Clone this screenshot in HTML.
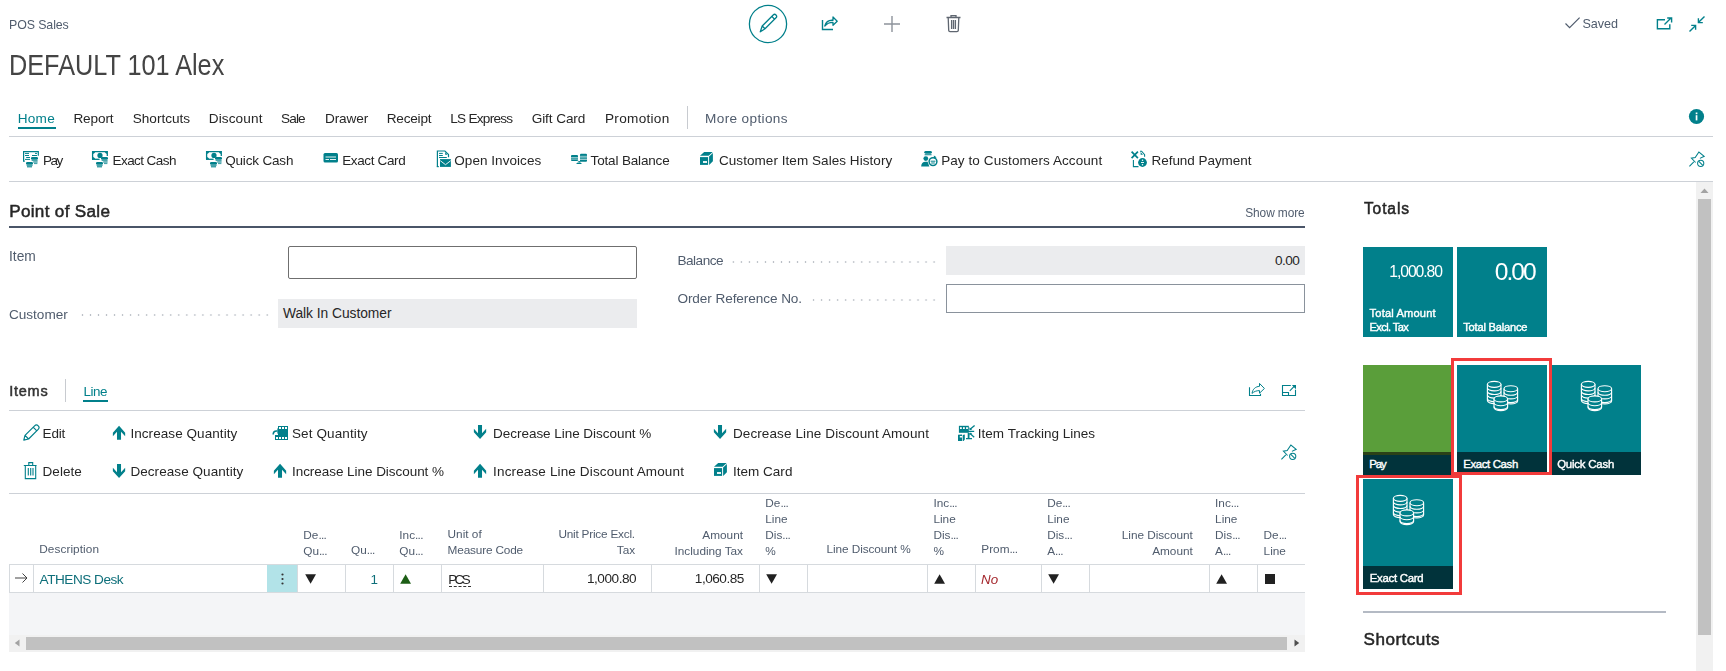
<!DOCTYPE html>
<html><head><meta charset="utf-8"><title>POS Sales</title>
<style>
html,body{margin:0;padding:0;background:#fff;}
body{width:1726px;height:671px;overflow:hidden;position:relative;font-family:"Liberation Sans", sans-serif;}
#w{position:absolute;left:0;top:0;width:1726px;height:671px;opacity:0.999;}
.t{position:absolute;white-space:nowrap;}
.r{position:absolute;display:block;}
</style></head><body><div id="w">
<div class="t" style="top:16.64px;font-size:12.4px;line-height:16.12px;color:#505c6d;letter-spacing:-0.106px;left:9px;">POS Sales</div>
<svg class="r" style="left:748px;top:4px;" width="40" height="40" viewBox="0 0 40 40"><circle cx="20" cy="20" r="18.6" fill="none" stroke="#00808b" stroke-width="1.3"/><path d="M12.3 27.8 L14.2 22 L25.2 11 A1.9 1.9 0 0 1 28 13.8 L17 24.8 Z M14.2 22 L17 24.8 M23.8 12.4 L26.6 15.2" fill="none" stroke="#00808b" stroke-width="1.3" stroke-linejoin="round"/></svg>
<svg class="r" style="left:820px;top:14px;" width="20" height="18" viewBox="0 0 20 18"><path d="M2.5 6 V15.5 H13" fill="none" stroke="#00808b" stroke-width="1.4"/><path d="M4.8 12 C6 7.5 9.5 6 13 6.3 V3 L17.2 7.2 L13 11.2 V8.4 C9.6 8.3 7 9.5 4.8 12 Z" fill="none" stroke="#00808b" stroke-width="1.3" stroke-linejoin="round"/></svg>
<svg class="r" style="left:882px;top:14px;" width="20" height="20" viewBox="0 0 20 20"><path d="M10 2 V18 M2 10 H18" stroke="#8d939b" stroke-width="1.4"/></svg>
<svg class="r" style="left:945px;top:14px;" width="17" height="20" viewBox="0 0 17 20"><path d="M1.5 3.5 H15.5 M6 3.5 V1.6 H11 V3.5 M3.2 3.5 L3.7 16.4 Q3.8 17.6 5 17.6 H12 Q13.2 17.6 13.3 16.4 L13.8 3.5 M6.6 6 V15 M8.5 6 V15 M10.4 6 V15" fill="none" stroke="#5f6670" stroke-width="1.3"/></svg>
<svg class="r" style="left:1564px;top:16px;" width="18" height="14" viewBox="0 0 18 14"><path d="M1.5 7.5 L5.6 11.6 L15.6 1.6" fill="none" stroke="#505c6d" stroke-width="1.2"/></svg>
<div class="t" style="top:16.14px;font-size:12.6px;line-height:16.38px;color:#505c6d;letter-spacing:-0.080px;left:1582.5px;">Saved</div>
<svg class="r" style="left:1655px;top:16px;" width="20" height="16" viewBox="0 0 20 16"><path d="M10 3.8 H2.4 V12.8 H14.8 V8.2" fill="none" stroke="#00808b" stroke-width="1.4"/><path d="M9.5 8.5 L16 2 M12.2 2 H16.6 V6.4" fill="none" stroke="#00808b" stroke-width="1.4"/></svg>
<svg class="r" style="left:1687px;top:14px;" width="20" height="20" viewBox="0 0 20 20"><path d="M2.5 17.5 L8.6 11.4 M4.2 11.4 H8.6 V15.8 M17.5 2.5 L11.4 8.6 M15.8 8.6 H11.4 V4.2" fill="none" stroke="#00808b" stroke-width="1.4"/></svg>
<div class="t" style="top:44.70px;font-size:30px;line-height:39.0px;color:#444;left:8.8px;transform:scaleX(0.842);transform-origin:0 0;">DEFAULT 101 Alex</div>
<div class="t" style="top:109.65px;font-size:13.6px;line-height:17.68px;color:#00808b;letter-spacing:0.272px;left:17.7px;">Home</div>
<div class="t" style="top:109.65px;font-size:13.6px;line-height:17.68px;color:#262626;letter-spacing:-0.123px;left:73.4px;">Report</div>
<div class="t" style="top:109.65px;font-size:13.6px;line-height:17.68px;color:#262626;letter-spacing:0.007px;left:132.7px;">Shortcuts</div>
<div class="t" style="top:109.65px;font-size:13.6px;line-height:17.68px;color:#262626;letter-spacing:0.126px;left:208.7px;">Discount</div>
<div class="t" style="top:109.65px;font-size:13.6px;line-height:17.68px;color:#262626;letter-spacing:-0.871px;left:281.0px;">Sale</div>
<div class="t" style="top:109.65px;font-size:13.6px;line-height:17.68px;color:#262626;letter-spacing:-0.127px;left:325.0px;">Drawer</div>
<div class="t" style="top:109.65px;font-size:13.6px;line-height:17.68px;color:#262626;letter-spacing:-0.203px;left:386.7px;">Receipt</div>
<div class="t" style="top:109.65px;font-size:13.6px;line-height:17.68px;color:#262626;letter-spacing:-0.726px;left:450.2px;">LS Express</div>
<div class="t" style="top:109.65px;font-size:13.6px;line-height:17.68px;color:#262626;letter-spacing:-0.089px;left:531.7px;">Gift Card</div>
<div class="t" style="top:109.65px;font-size:13.6px;line-height:17.68px;color:#262626;letter-spacing:0.289px;left:605.0px;">Promotion</div>
<div class="r" style="left:18px;top:127px;width:38px;height:2px;background:#00808b;"></div>
<div class="r" style="left:687px;top:106px;width:1px;height:23px;background:#c8cbd0;"></div>
<div class="t" style="top:109.65px;font-size:13.6px;line-height:17.68px;color:#505c6d;letter-spacing:0.353px;left:705.1px;">More options</div>
<svg class="r" style="left:1688px;top:108px;" width="17" height="17" viewBox="0 0 17 17"><circle cx="8.5" cy="8.5" r="7.6" fill="#00808b"/><rect x="7.7" y="7.2" width="1.7" height="5.2" fill="#fff"/><rect x="7.7" y="4.5" width="1.7" height="1.7" fill="#fff"/></svg>
<div class="r" style="left:9px;top:136px;width:1704px;height:1px;background:#cdd1d7;"></div>
<div class="t" style="top:151.75px;font-size:13.5px;line-height:17.55px;color:#262626;letter-spacing:-1.580px;left:43.1px;">Pay</div>
<div class="t" style="top:151.75px;font-size:13.5px;line-height:17.55px;color:#262626;letter-spacing:-0.581px;left:112.60000000000001px;">Exact Cash</div>
<div class="t" style="top:151.75px;font-size:13.5px;line-height:17.55px;color:#262626;letter-spacing:-0.174px;left:225.2px;">Quick Cash</div>
<div class="t" style="top:151.75px;font-size:13.5px;line-height:17.55px;color:#262626;letter-spacing:-0.363px;left:342.2px;">Exact Card</div>
<div class="t" style="top:151.75px;font-size:13.5px;line-height:17.55px;color:#262626;letter-spacing:0.050px;left:454.3px;">Open Invoices</div>
<div class="t" style="top:151.75px;font-size:13.5px;line-height:17.55px;color:#262626;letter-spacing:-0.163px;left:590.6px;">Total Balance</div>
<div class="t" style="top:151.75px;font-size:13.5px;line-height:17.55px;color:#262626;letter-spacing:0.054px;left:719.0px;">Customer Item Sales History</div>
<div class="t" style="top:151.75px;font-size:13.5px;line-height:17.55px;color:#262626;letter-spacing:0.084px;left:941.2px;">Pay to Customers Account</div>
<div class="t" style="top:151.75px;font-size:13.5px;line-height:17.55px;color:#262626;letter-spacing:-0.043px;left:1151.5px;">Refund Payment</div>
<svg class="r" style="left:18px;top:145px;" width="22" height="24" viewBox="0 0 22 24"><path d="M5.6 16.2 V6.6 H20.3 V10.7" fill="none" stroke="#00808b" stroke-width="1.2"/><path d="M5 16.2 H6.8" stroke="#00808b" stroke-width="1.2"/><path d="M7 8.4 H11 M17 8.4 H19 M7 10.5 H11 M14 10.5 H19 M8.2 12.5 H12 M7 14.4 H12" stroke="#00808b" stroke-width="1"/><rect x="13" y="12" width="7" height="2.7" rx="1.3" fill="#00808b"/><path d="M13.6 15.6 H19.6" stroke="#00808b" stroke-width="0.8"/><path d="M15.2 17 H19.6" stroke="#00808b" stroke-width="1.1"/><path d="M16 18.6 H19.4" stroke="#00808b" stroke-width="0.8"/><rect x="8" y="17" width="7" height="2.7" rx="1.3" fill="#00808b"/><path d="M8.6 20.6 H14.6" stroke="#00808b" stroke-width="0.8"/><path d="M9 21.8 H14" stroke="#00808b" stroke-width="1.1"/></svg>
<svg class="r" style="left:88px;top:145px;" width="22" height="24" viewBox="0 0 22 24"><path d="M4.6 14.3 V6.6 H19.3 V11" fill="none" stroke="#00808b" stroke-width="1.3"/><path d="M4 14.3 H11.6" stroke="#00808b" stroke-width="1.3"/><path d="M5 7 H7.2 Q6.6 8.6 5 9 Z M19 7 H16.8 Q17.4 8.6 19 9 Z M5 14 H7.2 Q6.6 12.4 5 12 Z" fill="#00808b"/><circle cx="12" cy="10.4" r="2.6" fill="#00808b"/><rect x="13" y="12" width="7" height="2.7" rx="1.3" fill="#00808b"/><path d="M13.6 15.6 H19.6" stroke="#00808b" stroke-width="0.8"/><path d="M15.2 17 H19.6" stroke="#00808b" stroke-width="1.1"/><path d="M16 18.6 H19.4" stroke="#00808b" stroke-width="0.8"/><rect x="8" y="17" width="7" height="2.7" rx="1.3" fill="#00808b"/><path d="M8.6 20.6 H14.6" stroke="#00808b" stroke-width="0.8"/><path d="M9 21.8 H14" stroke="#00808b" stroke-width="1.1"/></svg>
<svg class="r" style="left:202px;top:145px;" width="22" height="24" viewBox="0 0 22 24"><path d="M4.6 14.3 V6.6 H19.3 V11" fill="none" stroke="#00808b" stroke-width="1.3"/><path d="M4 14.3 H11.6" stroke="#00808b" stroke-width="1.3"/><path d="M5 7 H7.2 Q6.6 8.6 5 9 Z M19 7 H16.8 Q17.4 8.6 19 9 Z M5 14 H7.2 Q6.6 12.4 5 12 Z" fill="#00808b"/><circle cx="12" cy="10.4" r="2.6" fill="#00808b"/><rect x="13" y="12" width="7" height="2.7" rx="1.3" fill="#00808b"/><path d="M13.6 15.6 H19.6" stroke="#00808b" stroke-width="0.8"/><path d="M15.2 17 H19.6" stroke="#00808b" stroke-width="1.1"/><path d="M16 18.6 H19.4" stroke="#00808b" stroke-width="0.8"/><rect x="8" y="17" width="7" height="2.7" rx="1.3" fill="#00808b"/><path d="M8.6 20.6 H14.6" stroke="#00808b" stroke-width="0.8"/><path d="M9 21.8 H14" stroke="#00808b" stroke-width="1.1"/></svg>
<svg class="r" style="left:323px;top:152px;" width="16" height="12" viewBox="0 0 16 12"><rect x="0.5" y="1" width="14.5" height="9.5" rx="1.5" fill="#00808b"/><path d="M2.5 5 H13 M2.5 7.5 H6 M7 7.5 H13" stroke="#fff" stroke-width="0.9"/></svg>
<svg class="r" style="left:430px;top:145px;" width="23" height="24" viewBox="0 0 23 24"><path d="M7.4 21.8 V6 H14.9 L18.5 9.4 V12.3" fill="none" stroke="#00808b" stroke-width="1.2"/><path d="M6.8 21.6 H8.8" stroke="#00808b" stroke-width="1.2"/><path d="M15.2 7 L17.6 9.8 H15.2 Z" fill="#00808b"/><path d="M9 8.4 H12.8 M9 10.5 H12.8 M9 12.5 H16.8" stroke="#00808b" stroke-width="1"/><rect x="10" y="14.1" width="10.9" height="7.8" fill="#00808b"/><path d="M10.3 15.7 L15.5 19.7 L20.7 15.7" fill="none" stroke="#fff" stroke-width="0.9"/></svg>
<svg class="r" style="left:570px;top:152px;" width="18" height="13" viewBox="0 0 18 13"><rect x="1" y="2.9" width="7" height="6.1" rx="1" fill="#00808b"/><rect x="10" y="1.8" width="7" height="7.9" rx="1" fill="#00808b"/><path d="M0.5 5.6 H8.5 M0.5 7.1 H8.5 M9.5 4.3 H17.5 M9.5 5.9 H17.5 M9.5 7.5 H17.5" stroke="#fff" stroke-width="0.6"/><path d="M7 8.6 L11 9.4 L9.6 10.6 Z" fill="#00808b"/><path d="M6 11.9 H12 L10.4 10.4 H7.6 Z" fill="#00808b"/></svg>
<svg class="r" style="left:699px;top:151px;" width="16" height="15" viewBox="0 0 16 15"><path d="M1 4.7 L5.2 1 H13.7 L9.6 4.7 Z" fill="#00808b"/><rect x="1" y="6.1" width="8.1" height="7.8" fill="#00808b"/><path d="M10.1 5.6 L13.9 2 V10.3 L10.1 13.9 Z" fill="#00808b"/><rect x="4" y="10.1" width="4" height="1.8" fill="#fff"/></svg>
<svg class="r" style="left:920px;top:149px;" width="18" height="19" viewBox="0 0 18 19"><rect x="4.3" y="1.9" width="7.6" height="2.8" rx="1.4" fill="#00808b"/><rect x="4.5" y="5.3" width="7.2" height="1" rx="0.5" fill="#00808b"/><circle cx="5.8" cy="9.6" r="2.4" fill="#00808b"/><path d="M1.2 17.6 Q1.2 12.8 5.6 12.8 H7.6 L9.4 17.6 Z" fill="#00808b"/><circle cx="13" cy="12.6" r="3.9" fill="none" stroke="#00808b" stroke-width="1.5"/><path d="M10.6 12.2 H15.4 M11.2 14 H14.8" stroke="#00808b" stroke-width="1"/><path d="M13.8 6.6 L16.6 8.2 L14 9.6 Z" fill="#00808b"/></svg>
<svg class="r" style="left:1125px;top:145px;" width="23" height="24" viewBox="0 0 23 24"><path d="M6.6 6.6 L12.9 13.1 M12.9 6.6 L6.6 13.1" stroke="#00808b" stroke-width="1.7"/><path d="M15 6.2 H16.6 L19.6 9.6 V11.8" fill="none" stroke="#00808b" stroke-width="1.1"/><path d="M15.6 7 L18 9.8 H15.6 Z" fill="#00808b"/><path d="M8.4 14.9 V21.6 H13.5" fill="none" stroke="#00808b" stroke-width="1.1"/><circle cx="17.5" cy="17.5" r="4.4" fill="#00808b"/><circle cx="17.5" cy="15.3" r="0.75" fill="#fff"/><rect x="16" y="17.1" width="3" height="0.9" fill="#fff"/><circle cx="17.5" cy="19.7" r="0.75" fill="#fff"/></svg>
<svg class="r" style="left:1688px;top:151px;" width="18" height="18" viewBox="0 0 18 18"><path d="M1.4 15.4 L5.8 10.8 M7.6 11.5 L3.4 7.2 L7.2 6.5 L10.9 1 L16.2 5.3 L11.9 7.4" fill="none" stroke="#00808b" stroke-width="1.05" stroke-linejoin="miter"/><circle cx="12.7" cy="12.3" r="3.1" fill="none" stroke="#00808b" stroke-width="1.05"/><path d="M10.6 10.2 L14.8 14.4" stroke="#00808b" stroke-width="1.05"/></svg>
<div class="r" style="left:9px;top:181px;width:1704px;height:1px;background:#cdd1d7;"></div>
<div class="r" style="left:1696px;top:182px;width:17px;height:489px;background:#f1f1f1;"></div>
<svg class="r" style="left:1696px;top:182px;" width="17" height="17" viewBox="0 0 17 17"><path d="M4.5 11 L8.5 6.5 L12.5 11 Z" fill="#a3a3a3"/></svg>
<div class="r" style="left:1698px;top:199px;width:13px;height:436px;background:#c1c1c1;"></div>
<div class="t" style="top:200.96px;font-size:17.1px;line-height:22.23px;color:#262626;-webkit-text-stroke:0.5px #262626;letter-spacing:0.320px;left:9.2px;">Point of Sale</div>
<div class="t" style="top:206.04px;font-size:11.9px;line-height:15.47px;color:#505c6d;letter-spacing:-0.086px;right:421.39px;text-align:right;">Show more</div>
<div class="r" style="left:9px;top:226px;width:1296px;height:2px;background:#4a5568;"></div>
<div class="t" style="top:247.85px;font-size:13.8px;line-height:17.94px;color:#505c6d;letter-spacing:-0.014px;left:9.0px;">Item</div>
<div class="r" style="left:288px;top:246px;width:349px;height:33px;background:#fff;box-sizing:border-box;border:1px solid #6f6f6f;border-radius:2px;"></div>
<div class="t" style="top:305.65px;font-size:13.6px;line-height:17.68px;color:#505c6d;letter-spacing:-0.022px;left:9.0px;">Customer</div>
<div class="r" style="left:80px;top:314px;width:191.2px;height:2px;background:transparent;background-image:radial-gradient(circle, #b9bec5 0.85px, transparent 1.05px);background-size:8.04px 2px;background-repeat:repeat-x;background-position:right 0;"></div>
<div class="r" style="left:278px;top:299px;width:359px;height:29px;background:#ebecee;"></div>
<div class="t" style="top:305.45px;font-size:13.8px;line-height:17.94px;color:#262626;letter-spacing:-0.043px;left:283.0px;">Walk In Customer</div>
<div class="t" style="top:252.25px;font-size:13.6px;line-height:17.68px;color:#505c6d;letter-spacing:-0.492px;left:677.4px;">Balance</div>
<div class="r" style="left:730px;top:261px;width:208.10000000000002px;height:2px;background:transparent;background-image:radial-gradient(circle, #b9bec5 0.85px, transparent 1.05px);background-size:8.04px 2px;background-repeat:repeat-x;background-position:right 0;"></div>
<div class="r" style="left:946px;top:246px;width:359px;height:29px;background:#ebecee;"></div>
<div class="t" style="top:252.15px;font-size:13.6px;line-height:17.68px;color:#262626;letter-spacing:-0.589px;right:426.89px;text-align:right;">0.00</div>
<div class="t" style="top:290.45px;font-size:13.6px;line-height:17.68px;color:#505c6d;letter-spacing:-0.080px;left:677.4px;">Order Reference No.</div>
<div class="r" style="left:810px;top:299px;width:128.10000000000002px;height:2px;background:transparent;background-image:radial-gradient(circle, #b9bec5 0.85px, transparent 1.05px);background-size:8.04px 2px;background-repeat:repeat-x;background-position:right 0;"></div>
<div class="r" style="left:946px;top:284px;width:359px;height:29px;background:#fff;box-sizing:border-box;border:1px solid #8a929c;"></div>
<div class="t" style="top:198.75px;font-size:15.6px;line-height:20.28px;color:#262626;-webkit-text-stroke:0.5px #262626;letter-spacing:0.891px;left:1363.9px;">Totals</div>
<div class="r" style="left:1363px;top:247px;width:90px;height:90px;background:#00808b;"></div>
<div class="r" style="left:1457px;top:247px;width:90px;height:90px;background:#00808b;"></div>
<div class="t" style="top:261.75px;font-size:15.7px;line-height:20.41px;color:#fff;letter-spacing:-1.074px;right:284.17px;text-align:right;">1,000.80</div>
<div class="t" style="top:255.69px;font-size:24.6px;line-height:31.98px;color:#fff;letter-spacing:-2.024px;right:191.42px;text-align:right;">0.00</div>
<div class="t" style="top:305.94px;font-size:11.1px;line-height:14.43px;color:#fff;-webkit-text-stroke:0.4px #fff;letter-spacing:0.166px;left:1369.6px;">Total Amount</div>
<div class="t" style="top:319.94px;font-size:11.1px;line-height:14.43px;color:#fff;-webkit-text-stroke:0.4px #fff;letter-spacing:-0.626px;left:1369.6px;">Excl. Tax</div>
<div class="t" style="top:319.94px;font-size:11.1px;line-height:14.43px;color:#fff;-webkit-text-stroke:0.4px #fff;letter-spacing:-0.195px;left:1463.2px;">Total Balance</div>
<div class="r" style="left:1363px;top:365px;width:90px;height:110px;background:#5a9e3a;"></div>
<div class="r" style="left:1363px;top:452px;width:90px;height:3px;background:#2b4117;"></div>
<div class="r" style="left:1363px;top:455px;width:90px;height:20px;background:#00333b;"></div>
<div class="t" style="top:456.94px;font-size:11.4px;line-height:14.82px;color:#fff;-webkit-text-stroke:0.4px #fff;letter-spacing:-1.021px;left:1369.2px;">Pay</div>
<div class="r" style="left:1457px;top:365px;width:90px;height:110px;background:#00808b;"></div>
<div class="r" style="left:1457px;top:452px;width:90px;height:23px;background:#00333b;"></div>
<svg class="r" style="left:1486px;top:380px;" width="34" height="33" viewBox="0 0 34 33"><path d="M1.3999999999999995 4.3 V20.6 A6.8 3.0 0 0 0 15.0 20.6 V4.3" fill="#00808b" stroke="#fff" stroke-width="1.15"/><ellipse cx="8.2" cy="4.3" rx="6.8" ry="3.0" fill="#00808b" stroke="#fff" stroke-width="1.15"/><path d="M1.3999999999999995 7.9 A6.8 3.0 0 0 0 15.0 7.9" fill="none" stroke="#fff" stroke-width="1.15"/><path d="M1.3999999999999995 11.5 A6.8 3.0 0 0 0 15.0 11.5" fill="none" stroke="#fff" stroke-width="1.15"/><path d="M1.3999999999999995 15.100000000000001 A6.8 3.0 0 0 0 15.0 15.100000000000001" fill="none" stroke="#fff" stroke-width="1.15"/><path d="M1.3999999999999995 18.7 A6.8 3.0 0 0 0 15.0 18.7" fill="none" stroke="#fff" stroke-width="1.15"/><path d="M18.0 8.7 V20.9 A6.8 3.0 0 0 0 31.6 20.9 V8.7" fill="#00808b" stroke="#fff" stroke-width="1.15"/><ellipse cx="24.8" cy="8.7" rx="6.8" ry="3.0" fill="#00808b" stroke="#fff" stroke-width="1.15"/><path d="M18.0 12.299999999999999 A6.8 3.0 0 0 0 31.6 12.299999999999999" fill="none" stroke="#fff" stroke-width="1.15"/><path d="M18.0 15.899999999999999 A6.8 3.0 0 0 0 31.6 15.899999999999999" fill="none" stroke="#fff" stroke-width="1.15"/><path d="M18.0 19.5 A6.8 3.0 0 0 0 31.6 19.5" fill="none" stroke="#fff" stroke-width="1.15"/><path d="M8.0 18.9 V27.6 A6.8 3.0 0 0 0 21.6 27.6 V18.9" fill="#00808b" stroke="#fff" stroke-width="1.15"/><ellipse cx="14.8" cy="18.9" rx="6.8" ry="3.0" fill="#00808b" stroke="#fff" stroke-width="1.15"/><path d="M8.0 22.7 A6.8 3.0 0 0 0 21.6 22.7" fill="none" stroke="#fff" stroke-width="1.15"/><path d="M8.0 26.5 A6.8 3.0 0 0 0 21.6 26.5" fill="none" stroke="#fff" stroke-width="1.15"/></svg>
<div class="t" style="top:456.94px;font-size:11.4px;line-height:14.82px;color:#fff;-webkit-text-stroke:0.4px #fff;letter-spacing:-0.354px;left:1463.2px;">Exact Cash</div>
<div class="r" style="left:1551px;top:365px;width:90px;height:110px;background:#00808b;"></div>
<div class="r" style="left:1551px;top:452px;width:90px;height:23px;background:#00333b;"></div>
<svg class="r" style="left:1580px;top:380px;" width="34" height="33" viewBox="0 0 34 33"><path d="M1.3999999999999995 4.3 V20.6 A6.8 3.0 0 0 0 15.0 20.6 V4.3" fill="#00808b" stroke="#fff" stroke-width="1.15"/><ellipse cx="8.2" cy="4.3" rx="6.8" ry="3.0" fill="#00808b" stroke="#fff" stroke-width="1.15"/><path d="M1.3999999999999995 7.9 A6.8 3.0 0 0 0 15.0 7.9" fill="none" stroke="#fff" stroke-width="1.15"/><path d="M1.3999999999999995 11.5 A6.8 3.0 0 0 0 15.0 11.5" fill="none" stroke="#fff" stroke-width="1.15"/><path d="M1.3999999999999995 15.100000000000001 A6.8 3.0 0 0 0 15.0 15.100000000000001" fill="none" stroke="#fff" stroke-width="1.15"/><path d="M1.3999999999999995 18.7 A6.8 3.0 0 0 0 15.0 18.7" fill="none" stroke="#fff" stroke-width="1.15"/><path d="M18.0 8.7 V20.9 A6.8 3.0 0 0 0 31.6 20.9 V8.7" fill="#00808b" stroke="#fff" stroke-width="1.15"/><ellipse cx="24.8" cy="8.7" rx="6.8" ry="3.0" fill="#00808b" stroke="#fff" stroke-width="1.15"/><path d="M18.0 12.299999999999999 A6.8 3.0 0 0 0 31.6 12.299999999999999" fill="none" stroke="#fff" stroke-width="1.15"/><path d="M18.0 15.899999999999999 A6.8 3.0 0 0 0 31.6 15.899999999999999" fill="none" stroke="#fff" stroke-width="1.15"/><path d="M18.0 19.5 A6.8 3.0 0 0 0 31.6 19.5" fill="none" stroke="#fff" stroke-width="1.15"/><path d="M8.0 18.9 V27.6 A6.8 3.0 0 0 0 21.6 27.6 V18.9" fill="#00808b" stroke="#fff" stroke-width="1.15"/><ellipse cx="14.8" cy="18.9" rx="6.8" ry="3.0" fill="#00808b" stroke="#fff" stroke-width="1.15"/><path d="M8.0 22.7 A6.8 3.0 0 0 0 21.6 22.7" fill="none" stroke="#fff" stroke-width="1.15"/><path d="M8.0 26.5 A6.8 3.0 0 0 0 21.6 26.5" fill="none" stroke="#fff" stroke-width="1.15"/></svg>
<div class="t" style="top:456.94px;font-size:11.4px;line-height:14.82px;color:#fff;-webkit-text-stroke:0.4px #fff;letter-spacing:-0.202px;left:1557.2px;">Quick Cash</div>
<div class="r" style="left:1451px;top:358px;width:101px;height:117px;background:transparent;box-sizing:border-box;border:3px solid #f23b3b;"></div>
<div class="r" style="left:1363px;top:479px;width:90px;height:110px;background:#00808b;"></div>
<div class="r" style="left:1363px;top:566px;width:90px;height:23px;background:#00333b;"></div>
<svg class="r" style="left:1392px;top:494px;" width="34" height="33" viewBox="0 0 34 33"><path d="M1.3999999999999995 4.3 V20.6 A6.8 3.0 0 0 0 15.0 20.6 V4.3" fill="#00808b" stroke="#fff" stroke-width="1.15"/><ellipse cx="8.2" cy="4.3" rx="6.8" ry="3.0" fill="#00808b" stroke="#fff" stroke-width="1.15"/><path d="M1.3999999999999995 7.9 A6.8 3.0 0 0 0 15.0 7.9" fill="none" stroke="#fff" stroke-width="1.15"/><path d="M1.3999999999999995 11.5 A6.8 3.0 0 0 0 15.0 11.5" fill="none" stroke="#fff" stroke-width="1.15"/><path d="M1.3999999999999995 15.100000000000001 A6.8 3.0 0 0 0 15.0 15.100000000000001" fill="none" stroke="#fff" stroke-width="1.15"/><path d="M1.3999999999999995 18.7 A6.8 3.0 0 0 0 15.0 18.7" fill="none" stroke="#fff" stroke-width="1.15"/><path d="M18.0 8.7 V20.9 A6.8 3.0 0 0 0 31.6 20.9 V8.7" fill="#00808b" stroke="#fff" stroke-width="1.15"/><ellipse cx="24.8" cy="8.7" rx="6.8" ry="3.0" fill="#00808b" stroke="#fff" stroke-width="1.15"/><path d="M18.0 12.299999999999999 A6.8 3.0 0 0 0 31.6 12.299999999999999" fill="none" stroke="#fff" stroke-width="1.15"/><path d="M18.0 15.899999999999999 A6.8 3.0 0 0 0 31.6 15.899999999999999" fill="none" stroke="#fff" stroke-width="1.15"/><path d="M18.0 19.5 A6.8 3.0 0 0 0 31.6 19.5" fill="none" stroke="#fff" stroke-width="1.15"/><path d="M8.0 18.9 V27.6 A6.8 3.0 0 0 0 21.6 27.6 V18.9" fill="#00808b" stroke="#fff" stroke-width="1.15"/><ellipse cx="14.8" cy="18.9" rx="6.8" ry="3.0" fill="#00808b" stroke="#fff" stroke-width="1.15"/><path d="M8.0 22.7 A6.8 3.0 0 0 0 21.6 22.7" fill="none" stroke="#fff" stroke-width="1.15"/><path d="M8.0 26.5 A6.8 3.0 0 0 0 21.6 26.5" fill="none" stroke="#fff" stroke-width="1.15"/></svg>
<div class="t" style="top:571.04px;font-size:11.4px;line-height:14.82px;color:#fff;-webkit-text-stroke:0.4px #fff;letter-spacing:-0.287px;left:1369.8px;">Exact Card</div>
<div class="r" style="left:1356px;top:475px;width:106px;height:120px;background:transparent;box-sizing:border-box;border:3px solid #f23b3b;"></div>
<div class="r" style="left:1363px;top:611px;width:303px;height:2px;background:#b4bac4;"></div>
<div class="t" style="top:628.76px;font-size:17.1px;line-height:22.23px;color:#262626;-webkit-text-stroke:0.5px #262626;letter-spacing:0.471px;left:1363.6px;">Shortcuts</div>
<div class="t" style="top:382.35px;font-size:14.5px;line-height:18.85px;color:#333;-webkit-text-stroke:0.5px #333;letter-spacing:0.762px;left:9.2px;">Items</div>
<div class="r" style="left:65px;top:379px;width:1px;height:23px;background:#c8cbd0;"></div>
<div class="t" style="top:382.65px;font-size:13.4px;line-height:17.42px;color:#00808b;letter-spacing:-0.446px;left:83.4px;">Line</div>
<div class="r" style="left:83px;top:400px;width:25px;height:2px;background:#00808b;"></div>
<svg class="r" style="left:1247px;top:381px;" width="20" height="18" viewBox="0 0 20 18"><path d="M2.5 6.2 V14.5 H13.8 M13.5 12.8 V15" fill="none" stroke="#00808b" stroke-width="1.1"/><path d="M5 12.4 C5.6 8 8.6 5.6 12.5 5.3 V2.4 L17.4 7.5 L12.5 12.2 V9.6 C9.3 9.6 7 10.6 5 12.4 Z" fill="none" stroke="#00808b" stroke-width="1" stroke-linejoin="miter"/></svg>
<svg class="r" style="left:1280px;top:383px;" width="18" height="16" viewBox="0 0 18 16"><path d="M2 2.5 H10.8 M2.5 2 V13 M2 12.5 H16 M15.5 6.8 V13 M2.5 9.5 H8.5 V13 M9.8 7.8 L14.4 3.2" fill="none" stroke="#00808b" stroke-width="1.1"/><path d="M11.8 2 H16 V6.2 Z" fill="#00808b"/></svg>
<div class="r" style="left:9px;top:410px;width:1296px;height:1px;background:#cdd1d7;"></div>
<div class="t" style="top:425.05px;font-size:13.5px;line-height:17.55px;color:#262626;letter-spacing:-0.220px;left:42.6px;">Edit</div>
<div class="t" style="top:425.05px;font-size:13.5px;line-height:17.55px;color:#262626;letter-spacing:0.069px;left:130.39999999999998px;">Increase Quantity</div>
<div class="t" style="top:425.05px;font-size:13.5px;line-height:17.55px;color:#262626;letter-spacing:0.119px;left:292.0px;">Set Quantity</div>
<div class="t" style="top:425.05px;font-size:13.5px;line-height:17.55px;color:#262626;letter-spacing:-0.038px;left:493.09999999999997px;">Decrease Line Discount %</div>
<div class="t" style="top:425.05px;font-size:13.5px;line-height:17.55px;color:#262626;letter-spacing:0.116px;left:732.9000000000001px;">Decrease Line Discount Amount</div>
<div class="t" style="top:425.05px;font-size:13.5px;line-height:17.55px;color:#262626;letter-spacing:0.014px;left:977.8000000000001px;">Item Tracking Lines</div>
<div class="t" style="top:463.35px;font-size:13.5px;line-height:17.55px;color:#262626;letter-spacing:0.014px;left:42.6px;">Delete</div>
<div class="t" style="top:463.35px;font-size:13.5px;line-height:17.55px;color:#262626;letter-spacing:0.068px;left:130.39999999999998px;">Decrease Quantity</div>
<div class="t" style="top:463.35px;font-size:13.5px;line-height:17.55px;color:#262626;letter-spacing:-0.047px;left:292.0px;">Increase Line Discount %</div>
<div class="t" style="top:463.35px;font-size:13.5px;line-height:17.55px;color:#262626;letter-spacing:0.141px;left:493.09999999999997px;">Increase Line Discount Amount</div>
<div class="t" style="top:463.35px;font-size:13.5px;line-height:17.55px;color:#262626;letter-spacing:0.029px;left:732.9000000000001px;">Item Card</div>
<svg class="r" style="left:22px;top:424px;" width="18" height="18" viewBox="0 0 18 18"><path d="M1.8 16.2 L3 11.4 L12.6 1.8 A1.9 1.9 0 0 1 16.2 5.4 L6.6 15 Z M3 11.4 L6.6 15 M11.2 3.2 L14.8 6.8" fill="none" stroke="#00808b" stroke-width="1.2" stroke-linejoin="round"/></svg>
<svg class="r" style="left:22px;top:461px;" width="16" height="19" viewBox="0 0 16 19"><path d="M1.8 4.5 H14.6 M6.8 4.5 V1.6 H10.7 V4.5 M3.3 4.5 V17.6 H13.7 V4.5 M6.3 7 V14.6 M8.7 7 V14.6 M11 7 V14.6" fill="none" stroke="#00808b" stroke-width="1.1"/></svg>
<svg class="r" style="left:112px;top:424px;" width="14" height="17" viewBox="0 0 14 17"><path d="M7.06 1.87 L13.16 8.75 L13.16 12.19 L9.03 7.77 L9.03 15.83 L4.99 15.83 L4.99 7.77 L0.87 12.19 L0.87 8.75 Z" fill="#00808b"/></svg>
<svg class="r" style="left:112px;top:463px;" width="14" height="17" viewBox="0 0 14 17"><path d="M7.06 15.03 L13.16 8.15 L13.16 4.71 L9.03 9.13 L9.03 1.07 L4.99 1.07 L4.99 9.13 L0.87 4.71 L0.87 8.15 Z" fill="#00808b"/></svg>
<svg class="r" style="left:272px;top:425px;" width="17" height="15" viewBox="0 0 17 15"><rect x="3" y="1" width="13" height="14" fill="#00808b"/><rect x="4" y="12" width="2" height="2" fill="#fff"/><rect x="7" y="12" width="2" height="2" fill="#fff"/><rect x="10" y="12" width="2" height="2" fill="#fff"/><rect x="13" y="12" width="2" height="2" fill="#fff"/><rect x="7" y="2" width="2" height="2" fill="#fff"/><rect x="10" y="2" width="2" height="2" fill="#fff"/><rect x="13" y="2" width="2" height="2" fill="#fff"/><path d="M2.5 0.5 H6 V10 H2.5 Z" fill="#fff"/><path d="M1.2 9.5 Q1.2 6 4.5 6 H7.5" fill="none" stroke="#00808b" stroke-width="1.6"/><path d="M5.5 3.6 L8.4 6 L5.5 8.4" fill="none" stroke="#00808b" stroke-width="1.6"/></svg>
<svg class="r" style="left:273px;top:462px;" width="14" height="17" viewBox="0 0 14 17"><path d="M7.06 1.87 L13.16 8.75 L13.16 12.19 L9.03 7.77 L9.03 15.83 L4.99 15.83 L4.99 7.77 L0.87 12.19 L0.87 8.75 Z" fill="#00808b"/></svg>
<svg class="r" style="left:473.4px;top:424.2px;" width="14" height="17" viewBox="0 0 14 17"><path d="M7.06 15.03 L13.16 8.15 L13.16 4.71 L9.03 9.13 L9.03 1.07 L4.99 1.07 L4.99 9.13 L0.87 4.71 L0.87 8.15 Z" fill="#00808b"/></svg>
<svg class="r" style="left:473.4px;top:462px;" width="14" height="17" viewBox="0 0 14 17"><path d="M7.06 1.87 L13.16 8.75 L13.16 12.19 L9.03 7.77 L9.03 15.83 L4.99 15.83 L4.99 7.77 L0.87 12.19 L0.87 8.75 Z" fill="#00808b"/></svg>
<svg class="r" style="left:713.3px;top:424.2px;" width="14" height="17" viewBox="0 0 14 17"><path d="M7.06 15.03 L13.16 8.15 L13.16 4.71 L9.03 9.13 L9.03 1.07 L4.99 1.07 L4.99 9.13 L0.87 4.71 L0.87 8.15 Z" fill="#00808b"/></svg>
<svg class="r" style="left:713px;top:462px;" width="16" height="15" viewBox="0 0 16 15"><path d="M1 4.7 L5.2 1 H13.7 L9.6 4.7 Z" fill="#00808b"/><rect x="1" y="6.1" width="8.1" height="7.8" fill="#00808b"/><path d="M10.1 5.6 L13.9 2 V10.3 L10.1 13.9 Z" fill="#00808b"/><rect x="4" y="10.1" width="4" height="1.8" fill="#fff"/></svg>
<svg class="r" style="left:957px;top:424px;" width="19" height="18" viewBox="0 0 19 18"><rect x="1.9" y="1.8" width="9.9" height="7" fill="#00808b"/><rect x="3" y="3.2" width="1.8" height="1.8" fill="#fff"/><rect x="6" y="3.2" width="1.8" height="1.8" fill="#fff"/><rect x="9.1" y="3.2" width="1.8" height="1.8" fill="#fff"/><path d="M1 10.8 L5 10.4 V12 H2.8 V13.6 H5 V17 H1 Z M5.7 10.9 L7.8 10.4 V15.6 L6.6 17 H5.7 Z" fill="#00808b"/><path d="M11.6 8.8 V14.6" stroke="#00808b" stroke-width="1.8"/><path d="M10.6 7.4 H17.2 M9 14.6 H15" stroke="#00808b" stroke-width="1.2"/><path d="M12.8 5.6 L17.6 1.4 M12.8 9.2 L17.2 13.2" stroke="#00808b" stroke-width="1.3"/><path d="M12.4 3.2 L12.6 6 L15.2 5.8 Z M12.4 11.4 L12.6 8.8 L15.2 9 Z" fill="#00808b"/></svg>
<svg class="r" style="left:1280px;top:444px;" width="18" height="18" viewBox="0 0 18 18"><path d="M1.4 15.4 L5.8 10.8 M7.6 11.5 L3.4 7.2 L7.2 6.5 L10.9 1 L16.2 5.3 L11.9 7.4" fill="none" stroke="#00808b" stroke-width="1.05" stroke-linejoin="miter"/><circle cx="12.7" cy="12.3" r="3.1" fill="none" stroke="#00808b" stroke-width="1.05"/><path d="M10.6 10.2 L14.8 14.4" stroke="#00808b" stroke-width="1.05"/></svg>
<div class="r" style="left:9px;top:493px;width:1296px;height:1px;background:#cdd1d7;"></div>
<div class="t" style="top:541.74px;font-size:11.8px;line-height:15.34px;color:#505c6d;letter-spacing:0.078px;left:39.2px;">Description</div>
<div class="t" style="top:527.74px;font-size:11.8px;line-height:15.34px;color:#505c6d;left:303.3px;">De<span style="letter-spacing:-0.7px">...</span></div>
<div class="t" style="top:543.64px;font-size:11.8px;line-height:15.34px;color:#505c6d;left:303.3px;">Qu<span style="letter-spacing:-0.7px">...</span></div>
<div class="t" style="top:542.64px;font-size:11.8px;line-height:15.34px;color:#505c6d;left:351.1px;">Qu<span style="letter-spacing:-0.7px">...</span></div>
<div class="t" style="top:527.74px;font-size:11.8px;line-height:15.34px;color:#505c6d;left:399.3px;">Inc<span style="letter-spacing:-0.7px">...</span></div>
<div class="t" style="top:543.64px;font-size:11.8px;line-height:15.34px;color:#505c6d;left:399.3px;">Qu<span style="letter-spacing:-0.7px">...</span></div>
<div class="t" style="top:527.44px;font-size:11.8px;line-height:15.34px;color:#505c6d;left:447.6px;">Unit of</div>
<div class="t" style="top:543.34px;font-size:11.8px;line-height:15.34px;color:#505c6d;letter-spacing:-0.163px;left:447.6px;">Measure Code</div>
<div class="t" style="top:527.44px;font-size:11.8px;line-height:15.34px;color:#505c6d;letter-spacing:-0.219px;right:1091.12px;text-align:right;">Unit Price Excl.</div>
<div class="t" style="top:543.34px;font-size:11.8px;line-height:15.34px;color:#505c6d;right:1090.90px;text-align:right;">Tax</div>
<div class="t" style="top:527.64px;font-size:11.8px;line-height:15.34px;color:#505c6d;right:983.00px;text-align:right;">Amount</div>
<div class="t" style="top:543.54px;font-size:11.8px;line-height:15.34px;color:#505c6d;letter-spacing:-0.014px;right:983.01px;text-align:right;">Including Tax</div>
<div class="t" style="top:495.84px;font-size:11.8px;line-height:15.34px;color:#505c6d;left:765.3px;">De<span style="letter-spacing:-0.7px">...</span></div>
<div class="t" style="top:511.74px;font-size:11.8px;line-height:15.34px;color:#505c6d;left:765.3px;">Line</div>
<div class="t" style="top:527.64px;font-size:11.8px;line-height:15.34px;color:#505c6d;left:765.3px;">Dis<span style="letter-spacing:-0.7px">...</span></div>
<div class="t" style="top:543.54px;font-size:11.8px;line-height:15.34px;color:#505c6d;left:765.3px;">%</div>
<div class="t" style="top:542.04px;font-size:11.8px;line-height:15.34px;color:#505c6d;letter-spacing:-0.083px;left:826.6px;">Line Discount %</div>
<div class="t" style="top:495.84px;font-size:11.8px;line-height:15.34px;color:#505c6d;left:933.4px;">Inc<span style="letter-spacing:-0.7px">...</span></div>
<div class="t" style="top:511.74px;font-size:11.8px;line-height:15.34px;color:#505c6d;left:933.4px;">Line</div>
<div class="t" style="top:527.64px;font-size:11.8px;line-height:15.34px;color:#505c6d;left:933.4px;">Dis<span style="letter-spacing:-0.7px">...</span></div>
<div class="t" style="top:543.54px;font-size:11.8px;line-height:15.34px;color:#505c6d;left:933.4px;">%</div>
<div class="t" style="top:542.04px;font-size:11.8px;line-height:15.34px;color:#505c6d;left:981.3px;">Prom<span style="letter-spacing:-0.7px">...</span></div>
<div class="t" style="top:495.84px;font-size:11.8px;line-height:15.34px;color:#505c6d;left:1047.2px;">De<span style="letter-spacing:-0.7px">...</span></div>
<div class="t" style="top:511.74px;font-size:11.8px;line-height:15.34px;color:#505c6d;left:1047.2px;">Line</div>
<div class="t" style="top:527.64px;font-size:11.8px;line-height:15.34px;color:#505c6d;left:1047.2px;">Dis<span style="letter-spacing:-0.7px">...</span></div>
<div class="t" style="top:543.54px;font-size:11.8px;line-height:15.34px;color:#505c6d;left:1047.2px;">A<span style="letter-spacing:-0.7px">...</span></div>
<div class="t" style="top:527.64px;font-size:11.8px;line-height:15.34px;color:#505c6d;letter-spacing:-0.041px;right:533.24px;text-align:right;">Line Discount</div>
<div class="t" style="top:543.54px;font-size:11.8px;line-height:15.34px;color:#505c6d;right:533.20px;text-align:right;">Amount</div>
<div class="t" style="top:495.84px;font-size:11.8px;line-height:15.34px;color:#505c6d;left:1215.1px;">Inc<span style="letter-spacing:-0.7px">...</span></div>
<div class="t" style="top:511.74px;font-size:11.8px;line-height:15.34px;color:#505c6d;left:1215.1px;">Line</div>
<div class="t" style="top:527.64px;font-size:11.8px;line-height:15.34px;color:#505c6d;left:1215.1px;">Dis<span style="letter-spacing:-0.7px">...</span></div>
<div class="t" style="top:543.54px;font-size:11.8px;line-height:15.34px;color:#505c6d;left:1215.1px;">A<span style="letter-spacing:-0.7px">...</span></div>
<div class="t" style="top:527.64px;font-size:11.8px;line-height:15.34px;color:#505c6d;left:1263.6px;">De<span style="letter-spacing:-0.7px">...</span></div>
<div class="t" style="top:543.54px;font-size:11.8px;line-height:15.34px;color:#505c6d;left:1263.6px;">Line</div>
<div class="r" style="left:9px;top:564px;width:1296px;height:1px;background:#d6dade;"></div>
<div class="r" style="left:9px;top:592px;width:1296px;height:1px;background:#d6dade;"></div>
<div class="r" style="left:9px;top:564px;width:1px;height:29px;background:#d6dade;"></div>
<div class="r" style="left:33px;top:564px;width:1px;height:29px;background:#d6dade;"></div>
<div class="r" style="left:297px;top:564px;width:1px;height:29px;background:#d6dade;"></div>
<div class="r" style="left:345px;top:564px;width:1px;height:29px;background:#d6dade;"></div>
<div class="r" style="left:393px;top:564px;width:1px;height:29px;background:#d6dade;"></div>
<div class="r" style="left:441px;top:564px;width:1px;height:29px;background:#d6dade;"></div>
<div class="r" style="left:543px;top:564px;width:1px;height:29px;background:#d6dade;"></div>
<div class="r" style="left:651px;top:564px;width:1px;height:29px;background:#d6dade;"></div>
<div class="r" style="left:759px;top:564px;width:1px;height:29px;background:#d6dade;"></div>
<div class="r" style="left:807px;top:564px;width:1px;height:29px;background:#d6dade;"></div>
<div class="r" style="left:927px;top:564px;width:1px;height:29px;background:#d6dade;"></div>
<div class="r" style="left:975px;top:564px;width:1px;height:29px;background:#d6dade;"></div>
<div class="r" style="left:1041px;top:564px;width:1px;height:29px;background:#d6dade;"></div>
<div class="r" style="left:1089px;top:564px;width:1px;height:29px;background:#d6dade;"></div>
<div class="r" style="left:1209px;top:564px;width:1px;height:29px;background:#d6dade;"></div>
<div class="r" style="left:1257px;top:564px;width:1px;height:29px;background:#d6dade;"></div>
<div class="r" style="left:267px;top:565px;width:30px;height:27px;background:#b2e3e8;"></div>
<svg class="r" style="left:12px;top:571px;" width="18" height="14" viewBox="0 0 18 14"><path d="M3 7 H15 M10.5 2.5 L15 7 L10.5 11.5" fill="none" stroke="#3a3a3a" stroke-width="0.95"/></svg>
<div class="t" style="top:570.55px;font-size:13.6px;line-height:17.68px;color:#0e6f7a;letter-spacing:-0.484px;left:39.6px;">ATHENS Desk</div>
<svg class="r" style="left:279px;top:572px;" width="7" height="14" viewBox="0 0 7 14"><circle cx="3.5" cy="2.5" r="1.1" fill="#333"/><circle cx="3.5" cy="7" r="1.1" fill="#333"/><circle cx="3.5" cy="11.5" r="1.1" fill="#333"/></svg>
<svg class="r" style="left:305px;top:573px;" width="12" height="12" viewBox="0 0 12 12"><path d="M0.2 1.2 H11 L5.6 10.8 Z" fill="#212121"/></svg>
<svg class="r" style="left:400.2px;top:573px;" width="12" height="12" viewBox="0 0 12 12"><path d="M0.2 10.8 H11 L5.6 1.2 Z" fill="#1d5e16"/></svg>
<svg class="r" style="left:766.4px;top:573px;" width="12" height="12" viewBox="0 0 12 12"><path d="M0.2 1.2 H11 L5.6 10.8 Z" fill="#212121"/></svg>
<svg class="r" style="left:934px;top:573px;" width="12" height="12" viewBox="0 0 12 12"><path d="M0.2 10.8 H11 L5.6 1.2 Z" fill="#212121"/></svg>
<svg class="r" style="left:1048px;top:573px;" width="12" height="12" viewBox="0 0 12 12"><path d="M0.2 1.2 H11 L5.6 10.8 Z" fill="#212121"/></svg>
<svg class="r" style="left:1216.4px;top:573px;" width="12" height="12" viewBox="0 0 12 12"><path d="M0.2 10.8 H11 L5.6 1.2 Z" fill="#212121"/></svg>
<div class="r" style="left:1265px;top:574px;width:10px;height:10px;background:#212121;"></div>
<div class="t" style="top:570.65px;font-size:13.4px;line-height:17.42px;color:#0e6f7a;right:1348.00px;text-align:right;">1</div>
<div class="t" style="top:570.65px;font-size:13.4px;line-height:17.42px;color:#262626;letter-spacing:-2.525px;left:448.2px;">PCS</div>
<div class="r" style="left:448.5px;top:586px;width:22.5px;height:1px;background:transparent;border-top:1px dashed #333;"></div>
<div class="t" style="top:570.45px;font-size:13.6px;line-height:17.68px;color:#262626;letter-spacing:-0.464px;right:1089.86px;text-align:right;">1,000.80</div>
<div class="t" style="top:570.45px;font-size:13.6px;line-height:17.68px;color:#262626;letter-spacing:-0.478px;right:982.08px;text-align:right;">1,060.85</div>
<div class="t" style="top:570.65px;font-size:13.4px;line-height:17.42px;color:#a4262c;font-style:italic;left:981px;">No</div>
<div class="r" style="left:9px;top:593px;width:1296px;height:42px;background:#f4f5f7;"></div>
<div class="r" style="left:9px;top:635px;width:1296px;height:17px;background:#f1f1f1;"></div>
<div class="r" style="left:26px;top:637px;width:1261px;height:13px;background:#c1c1c1;"></div>
<svg class="r" style="left:9px;top:634px;" width="17" height="18" viewBox="0 0 17 18"><path d="M10.5 5.5 V12.5 L5.8 9 Z" fill="#a3a3a3"/></svg>
<svg class="r" style="left:1288px;top:634px;" width="17" height="18" viewBox="0 0 17 18"><path d="M6.5 5.5 V12.5 L11.2 9 Z" fill="#505050"/></svg>
</div></body></html>
